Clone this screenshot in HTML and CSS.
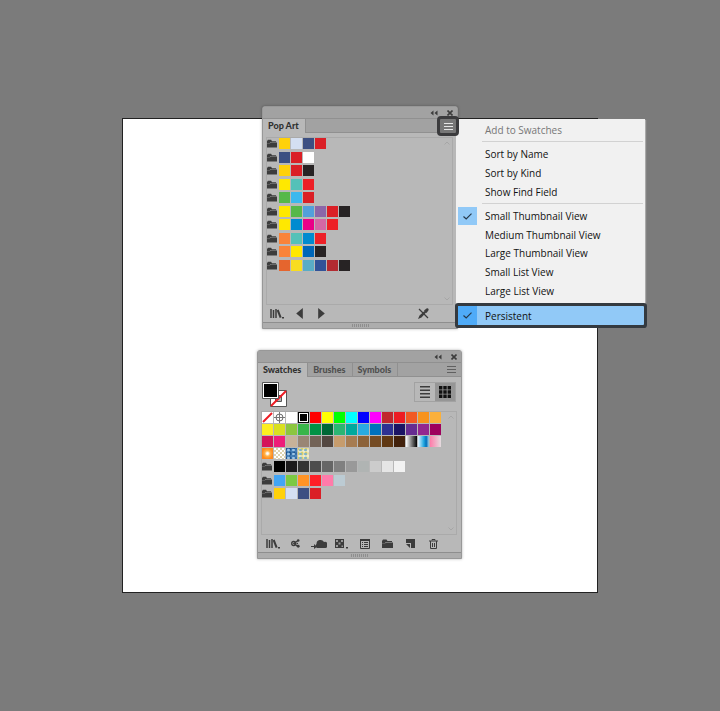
FILE: index.html
```html
<!DOCTYPE html>
<html lang="en">

<head>
    <meta charset="UTF-8">
    <meta name="viewport" content="width=device-width, initial-scale=1.0">
    <title>Swatches</title>
    <link rel="stylesheet" href="styles.css">
</head>

<body>
    <svg class="sprite" aria-hidden="true">
        <symbol id="folder" viewBox="0 0 11 9">
            <path d="M0 9V2l1-1.500h3.500l1 1.500H10v1H4L3 4H0z" />
            <path d="M0 4.300h3.300l1-.9H11V9H0z" />
        </symbol>
        <symbol id="collapse" viewBox="0 0 8 6">
            <path d="M3.500 .5v5L.5 3zM7.500 .5v5L4.500 3z" />
        </symbol>
        <symbol id="close" viewBox="0 0 6 6">
            <path d="M.5.5l5 5M5.500.5l-5 5" stroke="currentColor" stroke-width="1.600" />
        </symbol>
        <symbol id="lines" viewBox="0 0 9 7">
            <path d="M0 0h9v1H0zM0 3h9v1H0zM0 6h9v1H0z" />
        </symbol>
        <symbol id="library" viewBox="0 0 14 10">
            <path d="M1 0v9M3.500 1v8M6 0v9" stroke="currentColor" stroke-width="1.500" />
            <path d="M6.700 1.400L8.600.6l3 7.600-1.900.8z" />
            <path d="M12 8h2v1.500h-2z" />
        </symbol>
        <symbol id="edit-off" viewBox="0 0 11 11">
            <path d="M1 1l9 9" fill="none" stroke="currentColor" stroke-width="1.300" />
            <path d="M0 11l1.500-3.500 5-4.500 1.500 1.500L3.500 9.500zM6 2.500L8.500.5q1.500-.5 2 .5t-.5 2L8.500 5z" />
        </symbol>
        <symbol id="themes" viewBox="0 0 10 10">
            <path d="M7.500 2L3 5l4.500 3" fill="none" stroke="currentColor" stroke-width="1.300" />
            <circle cx="3" cy="5" r="2.200" fill="none" stroke="currentColor" stroke-width="1.500" />
            <circle cx="8" cy="1.700" r="1.400" />
            <circle cx="8" cy="8" r="1.600" />
            <circle cx="7" cy="5" r=".9" />
        </symbol>
        <symbol id="cloud" viewBox="0 0 16 10">
            <path d="M6 9a2.500 2.500 0 0 1-.5-4A4 4 0 0 1 13 3a3 3 0 0 1 1.500 6z" />
            <path d="M0 7h3V5l3 2.800L3 10V8H0z" />
        </symbol>
        <symbol id="kinds" viewBox="0 0 13 10">
            <path d="M0 0h9v9H0z" />
            <path d="M1 1h2v2H1zM6 1h2v2H6zM3.500 3.500h2v2h-2zM1 6h2v2H1zM6.500 6.500H8V8H6.500z" fill="#999" />
            <path d="M11 8h2v1.500h-2z" />
        </symbol>
        <symbol id="options" viewBox="0 0 10 10">
            <path d="M.5.5h9v9h-9z" fill="none" stroke="currentColor" />
            <path d="M0 0h10v2H0zM2 3h1v1H2zM4 3h4v1H4zM2 5h1v1H2zM4 5h4v1H4zM2 7h1v1H2zM4 7h4v1H4z" />
        </symbol>
        <symbol id="new" viewBox="0 0 9 9">
            <path d="M0 0h9v9H5V4H0z" />
            <path d="M0 5h4v4z" />
        </symbol>
        <symbol id="trash" viewBox="0 0 9 10">
            <path d="M0 2h9M3 1.500v-1h3v1M1.500 2v7.500h6V2M3.500 4v4M5.500 4v4" fill="none" stroke="currentColor" />
        </symbol>
        <symbol id="check" viewBox="0 0 9 7">
            <path d="M.5 3.500L3.200 6 8.500.7" fill="none" stroke="currentColor" stroke-width="1.200" />
        </symbol>
        <symbol id="prev" viewBox="0 0 6 10">
            <path d="M6 0v10L0 5z" />
        </symbol>
        <symbol id="next" viewBox="0 0 6 10">
            <path d="M0 0v10l6-5z" />
        </symbol>
        <symbol id="up" viewBox="0 0 6 4">
            <path d="M.5 3.500L3 1l2.500 2.500" fill="none" stroke="currentColor" />
        </symbol>
        <symbol id="down" viewBox="0 0 6 4">
            <path d="M.5.5L3 3 5.500.5" fill="none" stroke="currentColor" />
        </symbol>
    </svg>

    <main class="desktop">
        <div class="artboard"></div>

        <section class="panel pop-art" aria-label="Pop Art">
            <div class="title-bar">
                <button aria-label="Collapse"><svg width="8" height="6"><use href="#collapse" /></svg></button>
                <button aria-label="Close"><svg width="6" height="6"><use href="#close" /></svg></button>
            </div>
            <div class="tab-bar">
                <button class="tab active">Pop Art</button>
                <button class="panel-menu marked" aria-label="Panel menu"><svg width="9" height="7"><use href="#lines" /></svg></button>
            </div>
            <div class="swatch-box">
                <div class="groups" id="popGroups"></div>
                <div class="scroll">
                    <svg width="6" height="4"><use href="#up" /></svg>
                    <svg width="6" height="4"><use href="#down" /></svg>
                </div>
            </div>
            <div class="tools">
                <button aria-label="Libraries"><svg width="14" height="10"><use href="#library" /></svg></button>
                <button aria-label="Previous library"><svg width="7" height="11"><use href="#prev" /></svg></button>
                <button aria-label="Next library"><svg width="7" height="11"><use href="#next" /></svg></button>
                <button class="last" aria-label="Not editable"><svg width="11" height="11"><use href="#edit-off" /></svg></button>
            </div>
            <div class="grip"><span></span></div>
        </section>

        <section class="panel swatches" aria-label="Swatches">
            <div class="title-bar">
                <button aria-label="Collapse"><svg width="8" height="6"><use href="#collapse" /></svg></button>
                <button aria-label="Close"><svg width="6" height="6"><use href="#close" /></svg></button>
            </div>
            <div class="tab-bar">
                <button class="tab active">Swatches</button>
                <button class="tab">Brushes</button>
                <button class="tab">Symbols</button>
                <button class="panel-menu" aria-label="Panel menu"><svg width="9" height="7"><use href="#lines" /></svg></button>
            </div>
            <div class="options">
                <button class="fill-stroke" aria-label="Fill and stroke">
                    <svg width="26" height="26" viewBox="0 0 26 26">
                        <path d="M8.500 8.500h16v16h-16z" fill="#fff" stroke="#555" />
                        <path d="M13.500 13.500h6v6h-6z" fill="#b8b8b8" stroke="#555" />
                        <path d="M9 24L24 9" stroke="#ee1c24" stroke-width="2" />
                        <path d="M.5.5h16v16H.5z" fill="#fff" stroke="#555" />
                        <path d="M2 2h13v13H2z" fill="#000" />
                    </svg>
                </button>
                <div class="views">
                    <button aria-label="List view">
                        <svg width="10" height="12" viewBox="0 0 10 12"><path d="M0 0h10v1.500H0zM0 3.500h10V5H0zM0 7h10v1.500H0zM0 10.500h10V12H0z" /></svg>
                    </button>
                    <button class="active" aria-label="Thumbnail view">
                        <svg width="12" height="12" viewBox="0 0 12 12"><path d="M0 0h3.400v3.400H0zM4.300 0h3.400v3.400H4.300zM8.600 0H12v3.400H8.600zM0 4.300h3.400v3.400H0zM4.300 4.300h3.400v3.400H4.300zM8.600 4.300H12v3.400H8.600zM0 8.600h3.400V12H0zM4.300 8.600h3.400V12H4.300zM8.600 8.600H12V12H8.600z" /></svg>
                    </button>
                </div>
            </div>
            <div class="swatch-box">
                <div class="all">
                    <div class="flat" id="flat"></div>
                    <div class="groups" id="mainGroups"></div>
                </div>
                <div class="scroll">
                    <svg width="6" height="4"><use href="#up" /></svg>
                    <svg width="6" height="4"><use href="#down" /></svg>
                </div>
            </div>
            <div class="tools">
                <button aria-label="Libraries"><svg width="14" height="10"><use href="#library" /></svg></button>
                <button aria-label="Color themes"><svg width="9" height="9"><use href="#themes" /></svg></button>
                <button aria-label="Add to library"><svg width="16" height="10"><use href="#cloud" /></svg></button>
                <button aria-label="Show kinds"><svg width="13" height="10"><use href="#kinds" /></svg></button>
                <button aria-label="Swatch options"><svg width="10" height="10"><use href="#options" /></svg></button>
                <button aria-label="New group"><svg width="11" height="9"><use href="#folder" /></svg></button>
                <button aria-label="New swatch"><svg width="9" height="9"><use href="#new" /></svg></button>
                <button aria-label="Delete"><svg width="9" height="10"><use href="#trash" /></svg></button>
            </div>
            <div class="grip"><span></span></div>
        </section>

        <div class="menu" role="menu">
            <button class="item" role="menuitem" disabled><span class="tick"></span>Add to Swatches</button>
            <hr>
            <div class="three">
                <button class="item" role="menuitem"><span class="tick"></span>Sort by Name</button>
                <button class="item" role="menuitem"><span class="tick"></span>Sort by Kind</button>
                <button class="item" role="menuitem"><span class="tick"></span>Show Find Field</button>
            </div>
            <hr>
            <div class="five">
                <button class="item" role="menuitemradio" aria-checked="true"><span class="tick on"><svg width="9" height="7"><use href="#check" /></svg></span>Small Thumbnail View</button>
                <button class="item" role="menuitemradio" aria-checked="false"><span class="tick"></span>Medium Thumbnail View</button>
                <button class="item" role="menuitemradio" aria-checked="false"><span class="tick"></span>Large Thumbnail View</button>
                <button class="item" role="menuitemradio" aria-checked="false"><span class="tick"></span>Small List View</button>
                <button class="item" role="menuitemradio" aria-checked="false"><span class="tick"></span>Large List View</button>
            </div>
            <button class="item persistent" role="menuitemcheckbox" aria-checked="true"><span class="tick on"><svg width="9" height="7"><use href="#check" /></svg></span>Persistent</button>
        </div>
    </main>

    <script>
        var popGroups = [
            "#ffd10a #d4dff2 #3c4f82 #da1f26",
            "#3c4f82 #da1f26 #ffffff",
            "#ffd10a #da1f26 #272324",
            "#ffe800 #54c1b8 #ed2027",
            "#56b84a #3cb8ee #da1f26",
            "#ffe800 #56b84a #529fdb #8b66a9 #da1f26 #272324",
            "#ffe800 #008bd0 #ea0088 #d467a6 #ed2027",
            "#f98339 #54c1b8 #008bd0 #ed2027",
            "#f98339 #ffe800 #0066b8 #272324",
            "#e5652e #f8dd20 #5aacc6 #325298 #b32b31 #272324"
        ];
        var mainGroups = [
            "#000000 #1c1b1c #333333 #4d4d4d #666666 #808080 #999999 #b0b4b3 #cccccc #e5e5e5 #f2f2f2",
            "#42a5f5 #7cc943 #ff9326 #ff1f27 #ff7baa #bccbd3",
            "#ffd10a #d4dff2 #3c4f82 #da1f26"
        ];
        var flat = "none registration #ffffff #000000 #ff0000 #ffff00 #00ff00 #00ffff #0000ff #ff00ff #c1272d #ed1c24 #f15a24 #f7931e #fbb03b " +
            "#fcee21 #d9e021 #8cc63f #39b54a #009245 #006837 #2bb573 #00a99d #29abe2 #0071bc #2e3192 #1b1464 #662d91 #93278f #9e005d " +
            "#d4145a #ed1e79 #c7b299 #998675 #736357 #534741 #c69c6d #a67c52 #8c6239 #754c24 #603813 #42210b fade sky blush " +
            "sun mesh water camo";

        function addSwatch(parent, value) {
            var btn = document.createElement("button");
            btn.className = "swatch";
            btn.setAttribute("aria-label", value);
            if (value[0] == "#") {
                btn.style.backgroundColor = value;
            } else {
                btn.className += " " + value;
            }
            parent.appendChild(btn);
            return btn;
        }

        function addGroups(id, groups) {
            var box = document.getElementById(id);
            for (var i = 0; i < groups.length; i++) {
                var row = document.createElement("div");
                row.className = "group";
                row.innerHTML = '<svg width="10" height="9"><use href="#folder" /></svg>';
                groups[i].split(" ").forEach(function(value) {
                    addSwatch(row, value);
                });
                box.appendChild(row);
            }
        }

        addGroups("popGroups", popGroups);
        addGroups("mainGroups", mainGroups);

        flat.split(" ").forEach(function(value, i) {
            var btn = addSwatch(document.getElementById("flat"), value);
            if (i == 3) {
                btn.className += " selected";
            }
            if (value == "none") {
                btn.innerHTML = '<svg width="11" height="11"><path d="M1 10L10 1" stroke="#ee1c24" stroke-width="2" /></svg>';
            }
            if (value == "registration") {
                btn.innerHTML = '<svg width="11" height="11"><circle cx="5.500" cy="5.500" r="3.500" fill="none" stroke="#666" /><path d="M5.500 0v11M0 5.500h11" stroke="#777" /></svg>';
            }
        });
    </script>
</body>

</html>
```
FILE: styles.css
```css
* {
    margin: 0;
    padding: 0;
    box-sizing: border-box;
}

body {
    font-family: "Open Sans", "Noto Sans", sans-serif;
    background-color: #7b7b7b;
}

button {
    border: 0;
    background: none;
    font: inherit;
    color: inherit;
}

svg {
    display: block;
    fill: currentColor;
}

.sprite {
    position: absolute;
    width: 0;
    height: 0;
}

.desktop {
    position: relative;
    display: flex;
    min-height: 100vh;
    padding: 118px 122px;
}

.artboard {
    flex: 1;
    background-color: #fff;
    border: 1px solid #222;
}

/* floating panels */
.panel {
    position: absolute;
    background-color: #b8b8b8;
    color: #3c3c3c;
    border: 1px solid #989898;
    border-radius: 3px 3px 0 0;
    box-shadow: 0 0 3px rgba(0, 0, 0, 0.3);
}

.pop-art {
    left: 262px;
    top: 106px;
    width: 196px;
}

.swatches {
    left: 257px;
    top: 350px;
    width: 205px;
}

.title-bar {
    display: flex;
    justify-content: flex-end;
    align-items: center;
    gap: 9px;
    height: 11px;
    padding-right: 4px;
    background-color: #a2a2a2;
}

.tab-bar {
    display: flex;
    height: 15px;
    background-color: #a2a2a2;
    border-top: 1px solid #909090;
    border-bottom: 1px solid #909090;
}

.tab {
    height: 14px;
    padding: 0 6px 0 5px;
    border-right: 1px solid #909090;
    font-family: Lato, "Open Sans", sans-serif;
    font-size: 9px;
    line-height: 12px;
    font-weight: 900;
    color: #505050;
}

.tab.active {
    background-color: #b8b8b8;
    color: #303030;
}

.panel-menu {
    margin-left: auto;
    padding: 0 5px;
    color: #606060;
}

.panel-menu.marked {
    position: relative;
    z-index: 2;
    width: 22px;
    height: 20px;
    margin: -3px -2px 0 auto;
    padding: 0 3px;
    border: 3px solid #3b3b3d;
    border-radius: 4px;
    background-color: #777;
    color: #e6e6e6;
}

.panel-menu svg {
    margin: 0 auto;
}

.swatch-box {
    display: flex;
    justify-content: space-between;
    margin: 0 4px 0 3px;
    border: 1px solid #aaa;
}

.pop-art .swatch-box {
    height: 168px;
    margin-top: 4px;
}

.swatches .swatch-box {
    height: 124px;
}

.scroll {
    display: flex;
    flex-direction: column;
    justify-content: space-between;
    padding: 3px 2px;
    color: #a6a6a6;
}

.groups {
    display: flex;
    flex-direction: column;
    justify-content: space-between;
}

.pop-art .groups {
    height: 133px;
}

.swatches .groups {
    height: 38px;
    margin-top: 2px;
}

.group {
    display: flex;
    align-items: center;
    gap: 1px;
}

.group svg {
    margin-right: 1px;
}

.flat {
    display: grid;
    grid-template-columns: repeat(15, 11px);
    gap: 1px;
}

.swatch {
    width: 11px;
    height: 11px;
}

.selected {
    border: 1px solid #000;
    box-shadow: inset 0 0 0 1px #fff;
}

.none,
.registration {
    background-color: #fff;
}

.fade {
    background: linear-gradient(to right, #fff, #000);
}

.sky {
    background: linear-gradient(to right, #e8f5ff, #29abe2 50%, #0071bc 75%, #9fcbe8);
}

.blush {
    background: linear-gradient(to right, #ff7baa, #e4dcdf);
}

.sun {
    background: radial-gradient(#fff 10%, #ffb347 35%, #ff8a1c 70%);
}

.mesh {
    background: repeating-conic-gradient(#ddd3ae 0 25%, #fff 0 50%) 0 0 / 4px 4px;
}

.water {
    background:
        radial-gradient(#9cc5e6 1px, transparent 2px) 0 0 / 5px 4px,
        radial-gradient(#1f558f 1px, transparent 2px) 2px 3px / 4px 5px,
        #4480b8;
}

.camo {
    background:
        radial-gradient(#7fb3c8 1px, transparent 2px) 0 0 / 5px 4px,
        radial-gradient(#d8cf6a 1px, transparent 2px) 2px 3px / 4px 5px,
        #eeebd0;
}

.options {
    display: flex;
    justify-content: space-between;
    align-items: flex-start;
    height: 34px;
    padding: 5px 5px 0 4px;
}

.views {
    display: flex;
    border: 1px solid #a2a2a2;
}

.views button {
    display: flex;
    align-items: center;
    justify-content: center;
    width: 20px;
    height: 18px;
}

.views .active {
    background-color: #969696;
    color: #111;
}

.tools {
    display: flex;
    align-items: center;
    height: 17px;
    padding: 0 3px;
}

.tools button {
    display: flex;
    justify-content: center;
    width: 23px;
}

.pop-art .tools button {
    width: 22px;
}

.tools .last {
    margin-left: auto;
    margin-right: 20px;
}

.grip {
    display: flex;
    justify-content: center;
    align-items: center;
    height: 6px;
    background-color: #adadad;
    border-top: 1px solid #8e8e8e;
}

.grip span {
    width: 17px;
    height: 3px;
    background: repeating-linear-gradient(to right, #8e8e8e 0 1px, transparent 1px 2px);
}

/* panel menu */
.menu {
    position: absolute;
    left: 456px;
    top: 119px;
    width: 189px;
    padding: 1px 1px 1px 2px;
    background-color: #f1f1f1;
    box-shadow: 1px 1px 1px #aaa;
    font-size: 10px;
    color: #111;
}

.menu hr {
    margin: 2px 1px 3px 24px;
    border: 0;
    border-top: 1px solid #d2d2d2;
}

.three,
.five {
    display: grid;
    grid-auto-rows: 1fr;
}

.three {
    height: 56px;
}

.five {
    height: 93px;
}

.item {
    display: flex;
    align-items: center;
    gap: 8px;
    width: 100%;
    height: 19px;
    text-align: left;
}

.three .item,
.five .item {
    height: auto;
    min-height: 0;
}

.item:disabled {
    color: #777;
}

.tick {
    display: flex;
    align-items: center;
    justify-content: center;
    width: 19px;
    height: 18px;
}

.tick.on {
    background-color: #91c9f7;
    color: #26384a;
}

.persistent {
    margin-top: 6px;
    background-color: #91c9f7;
    border-radius: 1px;
    box-shadow: 0 0 0 3px #343a40;
}

.persistent .tick.on {
    height: 19px;
    background-color: #4fabf8;
}
```
